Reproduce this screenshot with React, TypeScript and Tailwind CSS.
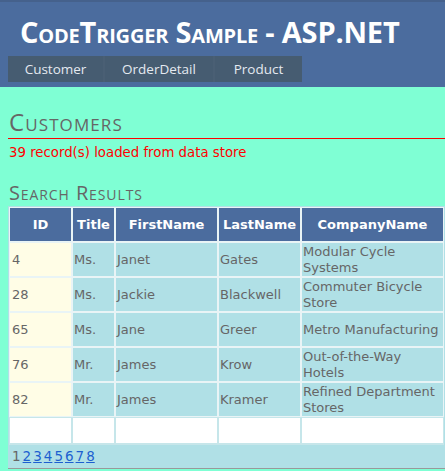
import React from "react";

const rows = [
  { id: "4", title: "Ms.", first: "Janet", last: "Gates", company: "Modular Cycle Systems" },
  { id: "28", title: "Ms.", first: "Jackie", last: "Blackwell", company: "Commuter Bicycle Store" },
  { id: "65", title: "Ms.", first: "Jane", last: "Greer", company: "Metro Manufacturing" },
  { id: "76", title: "Mr.", first: "James", last: "Krow", company: "Out-of-the-Way Hotels" },
  { id: "82", title: "Mr.", first: "James", last: "Kramer", company: "Refined Department Stores" },
];

export default function App() {
  return (
    <div className="min-h-screen w-[445px] overflow-hidden bg-[#7fffd4] font-['DejaVu_Sans',Verdana,sans-serif]">
      <header className="h-[87px] bg-[#4b6c9e] border-t-2 border-[#45618c]">
        <h1 className="pl-[20px] pt-[14px] h-[54px] font-['Open_Sans',sans-serif] font-bold text-[29px] leading-[32px] text-white [font-variant:small-caps] tracking-[-0.2px]">
          CodeTrigger Sample - ASP.NET
        </h1>
        <nav className="ml-2 flex h-[26px] w-[294px] bg-[#465c71] font-['Open_Sans',sans-serif] text-[13.5px] text-[#e4e9f0]">
          <div className="w-[97px] flex items-center justify-center border-r-2 border-[#4a5f74]">Customer</div>
          <div className="w-[110px] flex items-center justify-center border-r-2 border-[#4a5f74]">OrderDetail</div>
          <div className="flex-1 flex items-center justify-center">Product</div>
        </nav>
      </header>
      <main className="pl-2">
        <h2 className="pt-[20px] pl-[1px] font-['Open_Sans',sans-serif] text-[24px] leading-[30px] tracking-[1.1px] text-[#666666] [font-variant:small-caps]">
          Customers
        </h2>
        <div className="mt-[1px] h-px bg-[#ff0000]" />
        <p className="mt-[6px] pl-[1px] text-[13.3px] leading-[16px] text-[#ff0000]">39 record(s) loaded from data store</p>
        <h3 className="mt-[20px] pl-[1px] font-['Open_Sans',sans-serif] text-[20px] leading-[24px] tracking-[0.9px] text-[#666666] [font-variant:small-caps]">
          Search Results
        </h3>
        <table className="mt-[1px] w-[437px] border-separate border-spacing-0 border border-[#b0e0e6] bg-[#b0e0e6] text-[13px] leading-[16px] text-[#666666]">
          <thead>
            <tr className="bg-[#4b6c9e] text-white font-bold h-[35px]">
              <th className="w-[63px] border border-[#e9f4f6] align-middle">ID</th>
              <th className="w-[43px] border border-[#e9f4f6] align-middle">Title</th>
              <th className="w-[103px] border border-[#e9f4f6] align-middle">FirstName</th>
              <th className="w-[83px] border border-[#e9f4f6] align-middle">LastName</th>
              <th className="border border-[#e9f4f6] align-middle">CompanyName</th>
            </tr>
          </thead>
          <tbody>
            {rows.map((r) => (
              <tr key={r.id} className="h-[35px]">
                <td className="bg-[#fffde6] border border-[#e9f4f6] pl-[2px] align-middle">{r.id}</td>
                <td className="border border-[#e9f4f6] pl-[1px] align-middle">{r.title}</td>
                <td className="border border-[#e9f4f6] pl-[1px] align-middle">{r.first}</td>
                <td className="border border-[#e9f4f6] pl-[1px] align-middle">{r.last}</td>
                <td className="border border-[#e9f4f6] pl-[1px] pr-[2px] align-middle">{r.company}</td>
              </tr>
            ))}
            <tr className="h-[27px]">
              <td className="bg-white border border-[#c6e6ea]" />
              <td className="bg-white border border-[#c6e6ea]" />
              <td className="bg-white border border-[#c6e6ea]" />
              <td className="bg-white border border-[#c6e6ea]" />
              <td className="bg-white border border-[#c6e6ea]" />
            </tr>
            <tr className="h-[23px]">
              <td colSpan={5} className="pl-[3px] align-middle border-t border-[#c6e6ea] text-[13.5px]">
                <span>1</span>
                {["2", "3", "4", "5", "6", "7", "8"].map((n) => (
                  <a key={n} href="#" className="ml-[2px] text-[#1c5fd0] underline">{n}</a>
                ))}
              </td>
            </tr>
          </tbody>
        </table>
        <div className="h-px bg-[#999999]" />
      </main>
    </div>
  );
}
